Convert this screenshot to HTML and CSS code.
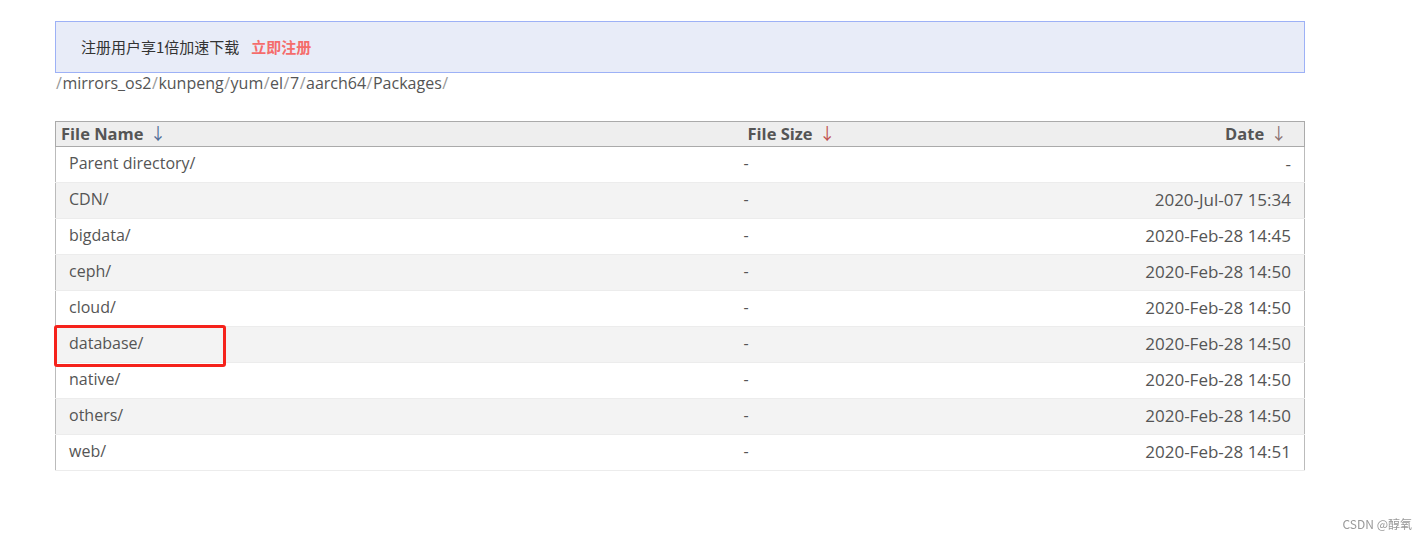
FILE: index.html
```html
<!DOCTYPE html>
<html lang="zh-CN">
<head>
<meta charset="utf-8">
<title>Packages</title>
<link rel="stylesheet" href="styles.css">
</head>
<body>
<div class="wrap">
  <div class="banner">注册用户享1倍加速下载<a class="reg" href="#">立即注册</a></div>
  <div class="path"><span class="sep">/</span>mirrors_os2<span class="sep">/</span>kunpeng<span class="sep">/</span>yum<span class="sep">/</span>el<span class="sep">/</span>7<span class="sep">/</span>aarch64<span class="sep">/</span>Packages<span class="sep">/</span></div>
  <table class="list">
    <thead>
      <tr>
        <th class="c-name">File Name <span class="ar ar-blue">↓</span></th>
        <th class="c-size">File Size <span class="ar ar-red">↓</span></th>
        <th class="c-date">Date <span class="ar ar-gray">↓</span></th>
      </tr>
    </thead>
    <tbody>
      <tr><td class="c-name">Parent directory/</td><td class="c-size">-</td><td class="c-date">-</td></tr>
      <tr><td class="c-name">CDN/</td><td class="c-size">-</td><td class="c-date">2020-Jul-07 15:34</td></tr>
      <tr><td class="c-name">bigdata/</td><td class="c-size">-</td><td class="c-date">2020-Feb-28 14:45</td></tr>
      <tr><td class="c-name">ceph/</td><td class="c-size">-</td><td class="c-date">2020-Feb-28 14:50</td></tr>
      <tr><td class="c-name">cloud/</td><td class="c-size">-</td><td class="c-date">2020-Feb-28 14:50</td></tr>
      <tr><td class="c-name">database/</td><td class="c-size">-</td><td class="c-date">2020-Feb-28 14:50</td></tr>
      <tr><td class="c-name">native/</td><td class="c-size">-</td><td class="c-date">2020-Feb-28 14:50</td></tr>
      <tr><td class="c-name">others/</td><td class="c-size">-</td><td class="c-date">2020-Feb-28 14:50</td></tr>
      <tr><td class="c-name">web/</td><td class="c-size">-</td><td class="c-date">2020-Feb-28 14:51</td></tr>
    </tbody>
  </table>
  <div class="mark"></div>
</div>
<div class="watermark">CSDN @醇氧</div>
</body>
</html>
```

FILE: styles.css
```css
html, body {
  margin: 0;
  padding: 0;
  background: #fff;
}
body {
  font-family: "Open Sans", "Noto Sans CJK SC", sans-serif;
  color: #555;
  height: 541px;
  overflow: hidden;
}
.wrap {
  position: relative;
  margin: 21px 0 0 55px;
  width: 1250px;
}
.banner {
  box-sizing: border-box;
  height: 52px;
  border: 1px solid #9db1f6;
  background: #e8ecf8;
  padding-left: 25px;
  line-height: 50px;
  font-family: "Noto Sans CJK SC", sans-serif;
  font-size: 15px;
  color: #333;
}
.reg {
  margin-left: 12px;
  color: #f56c6c;
  font-weight: bold;
  text-decoration: none;
}
.path {
  margin-top: 0;
  padding-left: 1px;
  font-size: 16px;
  line-height: 20px;
  color: #555;
}
.sep {
  color: #999;
  margin: 0 0.5px;
}
.sep:first-child {
  margin-left: 0;
}
.list {
  margin-top: 28px;
  width: 1250px;
  border-collapse: collapse;
  table-layout: fixed;
}
.list th, .list td {
  box-sizing: border-box;
}
.list th {
  background: #eee;
  border-top: 1px solid #aaa;
  border-bottom: 1px solid #aaa;
  height: 25px;
  padding: 0 0 2px 0;
  font-size: 16.5px;
  font-weight: bold;
  color: #555;
  line-height: 21px;
}
.list th:first-child { border-left: 1px solid #aaa; }
.list th:last-child { border-right: 1px solid #aaa; }
.list td {
  height: 36px;
  padding: 0 0 2px 0;
  border-bottom: 1px solid #ececec;
  line-height: 33px;
  color: #555;
}
.list td:first-child { border-left: 1px solid #bbb; }
.list td:last-child { border-right: 1px solid #bbb; }
.list tbody tr:nth-child(even) td { background: #f3f3f3; }
.c-name { width: 687px; text-align: left; }
th.c-name { padding-left: 5px; }
td.c-name { padding-left: 13px; font-size: 16px; }
.c-size { width: 300px; text-align: left; }
th.c-size { padding-left: 5px; }
td.c-size { padding-left: 1px; font-size: 16px; }
.c-date { text-align: right; }
th.c-date { padding-right: 17px; }
td.c-date { padding-right: 13px; font-size: 17px; }
.ar { font-weight: normal; margin-left: 2px; }
.ar-blue { color: #4f6b96; }
.ar-red { color: #c0504d; }
.ar-gray { color: #8a7070; }
.mark {
  position: absolute;
  left: -1px;
  top: 304px;
  width: 166px;
  height: 36px;
  border: 3px solid #f5221b;
  border-radius: 3px;
}
.watermark {
  position: fixed;
  right: 14px;
  bottom: 9px;
  font-family: "Noto Sans CJK SC", sans-serif;
  font-size: 12px;
  color: #999;
}
```
